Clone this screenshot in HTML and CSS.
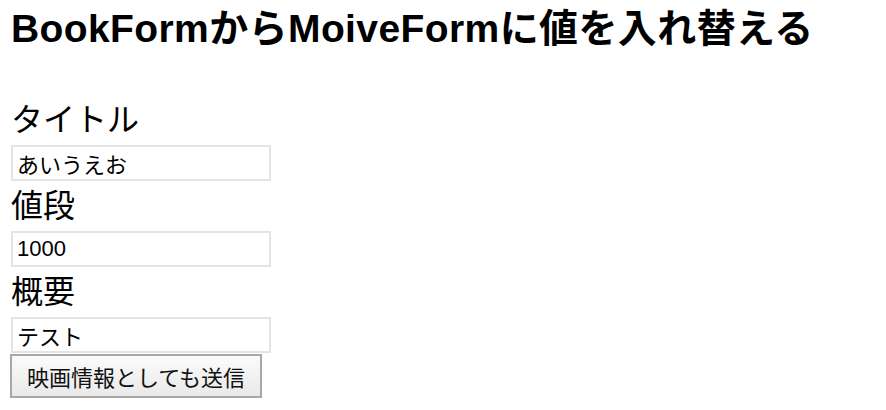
FILE: index.html
```html
<!DOCTYPE html>
<html lang="ja">
<head>
<meta charset="utf-8">
<link rel="stylesheet" href="styles.css">
</head>
<body>
<h1 class="title">BookFormからMoiveFormに値を入れ替える</h1>
<form class="form">
  <label class="label">タイトル</label>
  <input class="field" type="text" value="あいうえお">
  <label class="label">値段</label>
  <input class="field" type="text" value="1000">
  <label class="label">概要</label>
  <input class="field" type="text" value="テスト">
  <button class="submit" type="button">映画情報としても送信</button>
</form>
</body>
</html>
```
FILE: styles.css
```css
html, body {
  margin: 0;
  padding: 0;
  background: #fff;
  color: #000;
  font-family: "Liberation Sans", "Noto Sans CJK JP", sans-serif;
}
body {
  padding: 0 10px;
}
.title {
  margin: 0;
  padding: 4px 0 0 1px;
  height: 52px;
  font-size: 39px;
  font-weight: 700;
  line-height: 50px;
  letter-spacing: 0.4px;
  white-space: nowrap;
}
.form {
  display: flex;
  flex-direction: column;
  align-items: flex-start;
  margin-top: 39px;
}
.label {
  display: block;
  font-family: "Noto Sans CJK JP", sans-serif;
  font-size: 32px;
  line-height: 44px;
  height: 50px;
  padding-left: 1px;
}
.field {
  box-sizing: border-box;
  width: 260px;
  height: 36px;
  margin: 0 0 0 1px;
  padding: 0 4px;
  border: 2px solid #e4e4e4;
  background: #fff;
  font-family: "Liberation Sans", "Noto Sans CJK JP", sans-serif;
  font-size: 22px;
  color: #000;
  outline: none;
}
.submit {
  box-sizing: border-box;
  width: 252px;
  height: 44px;
  margin: 1px 0 0 0;
  padding: 0;
  border: 2px solid #a8a8a8;
  border-radius: 0;
  background: linear-gradient(#fbfbfb, #e9e9e9);
  font-family: "Noto Sans CJK JP", sans-serif;
  font-size: 22px;
  color: #111;
}
```
